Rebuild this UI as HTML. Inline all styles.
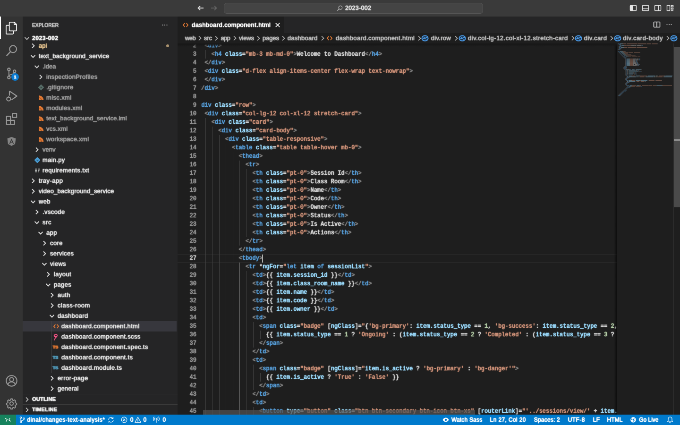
<!DOCTYPE html>
<html lang="en"><head><meta charset="utf-8"><title>dashboard.component.html — 2023-002</title>
<style>
html,body{margin:0;padding:0;background:#1e1e1e;overflow:hidden;width:680px;height:425px}
#app{position:absolute;left:0;top:0;width:1440px;height:900px;transform:scale(0.4722222);transform-origin:0 0;font-family:"Liberation Sans",sans-serif;font-size:13px;color:#ccc;background:#1e1e1e;overflow:hidden}
#app *{box-sizing:border-box}
#app{-webkit-text-stroke:0.35px currentColor;text-shadow:0 0 1.6px currentColor,0 0 1.6px currentColor;will-change:transform}
.abs{position:absolute}
/* title bar */
#title{position:absolute;left:0;top:0;width:1440px;height:35px;background:#3a3a3a}
#cc{position:absolute;left:474px;top:6px;width:549px;height:23px;border-radius:6px;background:#444444;border:1px solid #585858}
#cc .t{position:absolute;left:256px;top:3px;font-size:12.5px;color:#e2e2e2;white-space:nowrap;letter-spacing:.3px}
/* activity */
#act{position:absolute;left:0;top:35px;width:48px;height:843px;background:#333333}
#act .it{position:absolute;left:0;width:48px;height:48px;color:#989898}
#act .it svg{position:absolute;left:10.5px;top:10.5px;width:27px;height:27px;overflow:visible}
#act .it.on{color:#fff;border-left:2px solid #fff}
#act .it.on svg{left:9px}
/* sidebar */
#side{position:absolute;left:48px;top:35px;width:328px;height:843px;background:#252526;overflow:hidden}
#side .ttl{position:absolute;left:20px;top:13px;font-size:10.3px;color:#c4c4c4}
#side .hdr{position:absolute;left:0;width:328px;height:22px;font-size:12.3px;font-weight:bold;color:#ececec;-webkit-text-stroke:0.2px currentColor}
#side .hdr .lb{position:absolute;left:20px;top:3.5px;white-space:nowrap;letter-spacing:.45px}
#side .hdr svg{position:absolute;left:1px;top:3px;width:16px;height:16px}
#tree{position:absolute;left:0;top:57px;width:328px;height:742px;overflow:hidden}
.tr{position:absolute;left:0;width:328px;height:22px;color:#dedede;font-size:13px}
.tr .lb{position:absolute;top:3px;white-space:nowrap}
.tr.dim{color:#9a9a9a}
.tr.mod{color:#e2c08d}
.tr.sel{background:#37373d;width:326px}
.tr .twb{position:absolute;top:3px;width:16px;height:16px;color:#d6d6d6}
.tr.dim .twb{color:#cfcfcf}
.tw{width:16px;height:16px;display:block}
.tr .fib{position:absolute;top:3px;width:16px;height:16px}
.fi{width:16px;height:16px;display:block}
.fit{position:absolute;left:.5px;top:2px;font-size:9.800px;font-weight:bold;letter-spacing:-.4px;-webkit-text-stroke:.5px currentColor}
.dot{position:absolute;right:18px;top:8px;width:6px;height:6px;border-radius:3px;background:#e2c08d;opacity:.7}
.tg{position:absolute;width:1px;background:#4a4a4a}
/* editor */
#tabs{position:absolute;left:376px;top:35px;width:1064px;height:35px;background:#252526}
#tab{position:absolute;left:0;top:0;width:226px;height:35px;background:#1e1e1e}
#tab .lb{position:absolute;left:30px;top:10px;font-size:13px;color:#ffffff;white-space:nowrap;letter-spacing:.41px}
#bc{position:absolute;left:376px;top:70px;width:1064px;height:22px;background:#1e1e1e;font-size:13px;color:#bababa;overflow:hidden}
#bc span{position:absolute;top:3px;white-space:nowrap}
#bc svg{position:absolute;top:3px;width:16px;height:16px}
#ed{position:absolute;left:376px;top:92px;width:1064px;height:786px;background:#1e1e1e;overflow:hidden}
#codeclip{position:absolute;left:49px;top:0;width:881px;height:786px;overflow:hidden}
#codein{position:absolute;left:-49px;top:0;width:2000px;height:786px}
.cl{position:absolute;left:42.9px;height:18px;line-height:18px;font-family:"Liberation Mono",monospace;font-size:12px;letter-spacing:0.0254px;white-space:pre;color:#d4d4d4}
.ig{position:absolute;width:1px;background:#404040}
.ln{position:absolute;left:0;width:40px;height:18px;line-height:18px;text-align:right;font-family:"Liberation Mono",monospace;font-size:12px;color:#929292}
.ln.act{color:#c6c6c6}
#curline{position:absolute;left:0;top:446.3px;width:930px;height:18px;border-top:1.5px solid #2c2c2c;border-bottom:1.5px solid #2c2c2c}
#mmwrap{position:absolute;left:930px;top:0;width:120px;height:786px;background:#1e1e1e}
.mm{position:absolute;left:2px;top:0;opacity:.42}
#vsb{position:absolute;left:1050px;top:0;width:14px;height:786px;border-left:1px solid #303030}
#vsl{position:absolute;left:0px;top:7px;width:14px;height:340px;background:#4a4a4a}
#hsl{position:absolute;left:54px;top:775.500px;width:576px;height:10.500px;background:#505050;opacity:.75}
/* status */
#status{position:absolute;left:0;top:878px;width:1440px;height:22px;background:#007acc;color:#fff;font-size:12px}
#status .r{position:absolute;left:0;top:0;width:34px;height:22px;background:#16825d}
#status span{position:absolute;top:4px;white-space:nowrap}
#status svg{position:absolute;top:3px;width:16px;height:16px}
</style></head>
<body>
<div id="app">

<!-- TITLE BAR -->
<div id="title">
  <svg class="abs" style="left:417px;top:9px;width:16px;height:16px" viewBox="0 0 16 16"><path d="M14 8H3M7 3.500L2.500 8 7 12.500" fill="none" stroke="#dcdcdc" stroke-width="1.800"/></svg>
  <svg class="abs" style="left:445px;top:9px;width:16px;height:16px" viewBox="0 0 16 16"><path d="M2 8h11M9 3.500L13.500 8 9 12.500" fill="none" stroke="#6c6c6c" stroke-width="1.600"/></svg>
  <div id="cc">
    <svg class="abs" style="left:237px;top:3px;width:15px;height:15px" viewBox="0 0 16 16"><circle cx="9.500" cy="6.500" r="4" fill="none" stroke="#cccccc" stroke-width="1.200"/><path d="M6.700 9.300L2.500 13.500" stroke="#cccccc" stroke-width="1.300"/></svg>
    <span class="t">2023-002</span>
  </div>
  <!-- layout controls -->
  <svg class="abs" style="left:1333px;top:9px;width:16px;height:16px" viewBox="0 0 16 16"><rect x="1.500" y="2.500" width="13" height="11" rx="1" fill="none" stroke="#e4e4e4" stroke-width="1.500"/><rect x="2" y="3" width="5.500" height="10" fill="#e4e4e4"/></svg>
  <svg class="abs" style="left:1359px;top:9px;width:16px;height:16px" viewBox="0 0 16 16"><rect x="1.500" y="2.500" width="13" height="11" rx="1" fill="none" stroke="#e4e4e4" stroke-width="1.500"/><path d="M2 9.500h12" stroke="#e4e4e4" stroke-width="1.500"/></svg>
  <svg class="abs" style="left:1385px;top:9px;width:16px;height:16px" viewBox="0 0 16 16"><rect x="1.500" y="2.500" width="13" height="11" rx="1" fill="none" stroke="#e4e4e4" stroke-width="1.500"/><path d="M9.500 3v10" stroke="#e4e4e4" stroke-width="1.500"/></svg>
  <svg class="abs" style="left:1411px;top:9px;width:16px;height:16px" viewBox="0 0 16 16"><rect x="1.500" y="2.500" width="6" height="11" fill="none" stroke="#e4e4e4" stroke-width="1.500"/><rect x="10.500" y="2.500" width="4" height="3" fill="none" stroke="#e4e4e4" stroke-width="1.500"/><rect x="10.500" y="8" width="4" height="2.500" fill="none" stroke="#e4e4e4" stroke-width="1.500"/><path d="M10 13.500h5" stroke="#e4e4e4" stroke-width="1.500"/></svg>
</div>

<!-- ACTIVITY BAR -->
<div id="act">
  <div class="it on" style="top:0">
    <svg viewBox="0 0 24 24"><path d="M17.500 0h-9L7 1.500V6H2.500L1 7.500v15.070L2.500 24h12.070L16 22.570V18h4.700l1.300-1.430V4.500L17.500 0zm0 2.120l2.380 2.380H17.500V2.120zm-3 20.380h-12v-15H7v9.070L8.500 18h6v4.500zm6-6h-12v-15H16V6h4.500v10.500z" fill="currentColor"/></svg>
  </div>
  <div class="it" style="top:48px">
    <svg viewBox="0 0 24 24"><circle cx="14.800" cy="8.800" r="6.600" fill="none" stroke="currentColor" stroke-width="1.900"/><path d="M10.200 13.500L2.500 21.500" stroke="currentColor" stroke-width="2.100" fill="none"/></svg>
  </div>
  <div class="it" style="top:96px">
    <svg viewBox="0 0 24 24"><circle cx="7" cy="4.500" r="2.400" fill="none" stroke="currentColor" stroke-width="1.800"/><circle cx="7" cy="19.500" r="2.400" fill="none" stroke="currentColor" stroke-width="1.800"/><circle cx="17.500" cy="8" r="2.400" fill="none" stroke="currentColor" stroke-width="1.800"/><path d="M7 7v10M17.500 10.500c0 4-10.500 2.500-10.500 6.500" fill="none" stroke="currentColor" stroke-width="1.800"/></svg>
    <div class="abs" style="left:24px;top:24px;width:16px;height:16px;border-radius:8px;background:#0a7ad0;color:#fff;font-size:9px;font-weight:bold;text-align:center;line-height:16px">1</div>
  </div>
  <div class="it" style="top:144px">
    <svg viewBox="0 0 24 24"><path d="M8 2.500L22 12 12 19M8 11V2.500" fill="none" stroke="currentColor" stroke-width="1.900" stroke-linejoin="round"/><circle cx="6.500" cy="17.500" r="3.600" fill="none" stroke="currentColor" stroke-width="1.800"/><path d="M6.500 13.500v-2M1.500 17.500h1.500M10 17.500h1.500M3 13.800l1.200 1.200M10 13.800l-1.200 1.200" stroke="currentColor" stroke-width="1.300"/></svg>
  </div>
  <div class="it" style="top:192px">
    <svg viewBox="0 0 24 24"><path d="M2.500 7.500h7.500v7.500h7.500v7.500h-15zM10 15H2.500M10 15v7.500" fill="none" stroke="currentColor" stroke-width="1.900"/><rect x="14" y="2" width="7.500" height="7.500" fill="none" stroke="currentColor" stroke-width="1.900"/></svg>
  </div>
  <div class="it" style="top:240px">
    <svg viewBox="0 0 24 24"><g transform="translate(1.400,1.400) scale(.88)"><path d="M12 2.500l9 3.200-1.400 11.800L12 21.700l-7.600-4.200L3 5.700z" fill="#848484"/><path d="M12 6l-5 11h2l1-2.600h4l1 2.600h2zm0 3.700l1.400 3.300h-2.800z" fill="#333333"/></g></svg>
  </div>
  <div class="it" style="top:747px">
    <svg viewBox="0 0 24 24"><circle cx="12" cy="12" r="10" fill="none" stroke="currentColor" stroke-width="1.800"/><circle cx="12" cy="9.500" r="3.600" fill="none" stroke="currentColor" stroke-width="1.800"/><path d="M5 19c1-3.500 3.800-5 7-5s6 1.500 7 5" fill="none" stroke="currentColor" stroke-width="1.800"/></svg>
  </div>
  <div class="it" style="top:795px">
    <svg viewBox="0 0 24 24"><circle cx="12" cy="12" r="3.200" fill="none" stroke="currentColor" stroke-width="1.800"/><path d="M12 2.200l1.600.2.700 2.600 1.700.7 2.300-1.300 2.300 2.300-1.300 2.300.7 1.700 2.600.7v3.200l-2.600.7-.7 1.700 1.300 2.300-2.300 2.300-2.300-1.300-1.700.7-.7 2.600h-3.200l-.7-2.600-1.700-.7-2.300 1.300-2.300-2.300 1.300-2.300-.7-1.700-2.600-.7v-3.200l2.600-.7.7-1.700-1.300-2.300 2.300-2.300 2.300 1.300 1.700-.7.700-2.600z" fill="none" stroke="currentColor" stroke-width="1.900" stroke-linejoin="round" transform="translate(1.200,1.200) scale(.9)"/></svg>
  </div>
</div>

<!-- SIDE BAR -->
<div id="side">
  <div class="ttl">EXPLORER</div>
  <svg class="abs" style="left:293px;top:10px;width:16px;height:16px" viewBox="0 0 16 16"><circle cx="3.500" cy="8" r="1.100" fill="#c5c5c5"/><circle cx="8" cy="8" r="1.100" fill="#c5c5c5"/><circle cx="12.500" cy="8" r="1.100" fill="#c5c5c5"/></svg>
  <div class="hdr" style="top:35px"><svg viewBox="0 0 16 16"><path d="M3.500 6l4.500 4.500L12.500 6" fill="none" stroke="#d0d0d0" stroke-width="1.700"/></svg><span class="lb">2023-002</span></div>
  <div id="tree">
<div class="tr mod" style="top:-6px"><span class="twb" style="left:14px"><svg class="tw" viewBox="0 0 16 16"><path d="M6 3.5l4.5 4.5L6 12.5" fill="none" stroke="currentColor" stroke-width="2"/></svg></span><span class="lb" style="left:34px;letter-spacing:0.04px">api</span><span class="dot"></span></div>
<div class="tr" style="top:16px"><span class="twb" style="left:14px"><svg class="tw" viewBox="0 0 16 16"><path d="M3.5 6l4.5 4.5L12.5 6" fill="none" stroke="currentColor" stroke-width="2"/></svg></span><span class="lb" style="left:34px;letter-spacing:0.21px">text_background_service</span></div>
<div class="tr dim" style="top:38px"><span class="twb" style="left:22px"><svg class="tw" viewBox="0 0 16 16"><path d="M3.5 6l4.5 4.5L12.5 6" fill="none" stroke="currentColor" stroke-width="2"/></svg></span><span class="lb" style="left:42px;letter-spacing:0.08px">.idea</span></div>
<div class="tr dim" style="top:60px"><span class="twb" style="left:30px"><svg class="tw" viewBox="0 0 16 16"><path d="M6 3.5l4.5 4.5L6 12.5" fill="none" stroke="currentColor" stroke-width="2"/></svg></span><span class="lb" style="left:50px;letter-spacing:0.37px">inspectionProfiles</span></div>
<div class="tr dim" style="top:82px"><span class="fib" style="left:31px"><svg class="fi" viewBox="0 0 16 16"><rect x="3.4" y="3.4" width="9.200" height="9.200" transform="rotate(45 8 8)" fill="#566b66"/><circle cx="8" cy="8" r="1.300" fill="#2c3634"/></svg></span><span class="lb" style="left:50px;letter-spacing:0.42px">.gitignore</span></div>
<div class="tr dim" style="top:104px"><span class="fib" style="left:31px"><svg class="fi" viewBox="0 0 16 16"><path d="M3.500 3.200c5.500 0 9.800 4.300 9.800 9.800H3.500z" fill="#e37933"/><path d="M3.500 7.800a5.200 5.200 0 0 1 5.200 5.200" fill="none" stroke="#8a4a22" stroke-width="1.100"/></svg></span><span class="lb" style="left:50px;letter-spacing:0.37px">misc.xml</span></div>
<div class="tr dim" style="top:126px"><span class="fib" style="left:31px"><svg class="fi" viewBox="0 0 16 16"><path d="M3.500 3.200c5.500 0 9.800 4.300 9.800 9.800H3.500z" fill="#e37933"/><path d="M3.500 7.800a5.200 5.200 0 0 1 5.200 5.200" fill="none" stroke="#8a4a22" stroke-width="1.100"/></svg></span><span class="lb" style="left:50px;letter-spacing:0.30px">modules.xml</span></div>
<div class="tr dim" style="top:148px"><span class="fib" style="left:31px"><svg class="fi" viewBox="0 0 16 16"><path d="M3.500 3.200c5.500 0 9.800 4.300 9.800 9.800H3.500z" fill="#e37933"/><path d="M3.500 7.800a5.200 5.200 0 0 1 5.200 5.200" fill="none" stroke="#8a4a22" stroke-width="1.100"/></svg></span><span class="lb" style="left:50px;letter-spacing:0.23px">text_background_service.iml</span></div>
<div class="tr dim" style="top:170px"><span class="fib" style="left:31px"><svg class="fi" viewBox="0 0 16 16"><path d="M3.500 3.200c5.500 0 9.800 4.300 9.800 9.800H3.500z" fill="#e37933"/><path d="M3.500 7.800a5.200 5.200 0 0 1 5.200 5.200" fill="none" stroke="#8a4a22" stroke-width="1.100"/></svg></span><span class="lb" style="left:50px;letter-spacing:0.31px">vcs.xml</span></div>
<div class="tr dim" style="top:192px"><span class="fib" style="left:31px"><svg class="fi" viewBox="0 0 16 16"><path d="M3.500 3.200c5.500 0 9.800 4.300 9.800 9.800H3.500z" fill="#e37933"/><path d="M3.500 7.800a5.200 5.200 0 0 1 5.200 5.200" fill="none" stroke="#8a4a22" stroke-width="1.100"/></svg></span><span class="lb" style="left:50px;letter-spacing:0.35px">workspace.xml</span></div>
<div class="tr dim" style="top:214px"><span class="twb" style="left:22px"><svg class="tw" viewBox="0 0 16 16"><path d="M6 3.5l4.5 4.5L6 12.5" fill="none" stroke="currentColor" stroke-width="2"/></svg></span><span class="lb" style="left:42px;letter-spacing:0.02px">venv</span></div>
<div class="tr" style="top:236px"><span class="fib" style="left:23px"><svg class="fi" viewBox="0 0 16 16"><rect x="3.300" y="3.300" width="9.400" height="9.400" rx="1.500" transform="rotate(45 8 8)" fill="#4a9fd6"/><path d="M4.500 8h3v-2.500M11.500 8h-3v2.500" fill="none" stroke="#2b5f86" stroke-width="1"/></svg></span><span class="lb" style="left:42px;letter-spacing:0.30px">main.py</span></div>
<div class="tr" style="top:258px"><span class="fib" style="left:23px"><svg class="fi" viewBox="0 0 16 16"><path d="M3 4h4M3 7h4M3 10h4M9 4h5M9 7h3.500M9 10h2.500" transform="translate(0,1)" stroke="#d4d7d6" stroke-width="1.5" fill="none"/></svg></span><span class="lb" style="left:42px;letter-spacing:0.36px">requirements.txt</span></div>
<div class="tr" style="top:280px"><span class="twb" style="left:14px"><svg class="tw" viewBox="0 0 16 16"><path d="M6 3.5l4.5 4.5L6 12.5" fill="none" stroke="currentColor" stroke-width="2"/></svg></span><span class="lb" style="left:34px;letter-spacing:0.46px">tray-app</span></div>
<div class="tr" style="top:302px"><span class="twb" style="left:14px"><svg class="tw" viewBox="0 0 16 16"><path d="M6 3.5l4.5 4.5L6 12.5" fill="none" stroke="currentColor" stroke-width="2"/></svg></span><span class="lb" style="left:34px;letter-spacing:0.20px">video_background_service</span></div>
<div class="tr" style="top:324px"><span class="twb" style="left:14px"><svg class="tw" viewBox="0 0 16 16"><path d="M3.5 6l4.5 4.5L12.5 6" fill="none" stroke="currentColor" stroke-width="2"/></svg></span><span class="lb" style="left:34px;letter-spacing:0.34px">web</span></div>
<div class="tr" style="top:346px"><span class="twb" style="left:22px"><svg class="tw" viewBox="0 0 16 16"><path d="M6 3.5l4.5 4.5L6 12.5" fill="none" stroke="currentColor" stroke-width="2"/></svg></span><span class="lb" style="left:42px;letter-spacing:0.40px">.vscode</span></div>
<div class="tr" style="top:368px"><span class="twb" style="left:22px"><svg class="tw" viewBox="0 0 16 16"><path d="M3.5 6l4.5 4.5L12.5 6" fill="none" stroke="currentColor" stroke-width="2"/></svg></span><span class="lb" style="left:42px;letter-spacing:0.57px">src</span></div>
<div class="tr" style="top:390px"><span class="twb" style="left:30px"><svg class="tw" viewBox="0 0 16 16"><path d="M3.5 6l4.5 4.5L12.5 6" fill="none" stroke="currentColor" stroke-width="2"/></svg></span><span class="lb" style="left:50px;letter-spacing:0.35px">app</span></div>
<div class="tr" style="top:412px"><span class="twb" style="left:38px"><svg class="tw" viewBox="0 0 16 16"><path d="M6 3.5l4.5 4.5L6 12.5" fill="none" stroke="currentColor" stroke-width="2"/></svg></span><span class="lb" style="left:58px;letter-spacing:0.43px">core</span></div>
<div class="tr" style="top:434px"><span class="twb" style="left:38px"><svg class="tw" viewBox="0 0 16 16"><path d="M6 3.5l4.5 4.5L6 12.5" fill="none" stroke="currentColor" stroke-width="2"/></svg></span><span class="lb" style="left:58px;letter-spacing:0.33px">services</span></div>
<div class="tr" style="top:456px"><span class="twb" style="left:38px"><svg class="tw" viewBox="0 0 16 16"><path d="M3.5 6l4.5 4.5L12.5 6" fill="none" stroke="currentColor" stroke-width="2"/></svg></span><span class="lb" style="left:58px;letter-spacing:0.27px">views</span></div>
<div class="tr" style="top:478px"><span class="twb" style="left:46px"><svg class="tw" viewBox="0 0 16 16"><path d="M6 3.5l4.5 4.5L6 12.5" fill="none" stroke="currentColor" stroke-width="2"/></svg></span><span class="lb" style="left:66px;letter-spacing:0.39px">layout</span></div>
<div class="tr" style="top:500px"><span class="twb" style="left:46px"><svg class="tw" viewBox="0 0 16 16"><path d="M3.5 6l4.5 4.5L12.5 6" fill="none" stroke="currentColor" stroke-width="2"/></svg></span><span class="lb" style="left:66px;letter-spacing:0.33px">pages</span></div>
<div class="tr" style="top:522px"><span class="twb" style="left:54px"><svg class="tw" viewBox="0 0 16 16"><path d="M6 3.5l4.5 4.5L6 12.5" fill="none" stroke="currentColor" stroke-width="2"/></svg></span><span class="lb" style="left:74px;letter-spacing:0.42px">auth</span></div>
<div class="tr" style="top:544px"><span class="twb" style="left:54px"><svg class="tw" viewBox="0 0 16 16"><path d="M6 3.5l4.5 4.5L6 12.5" fill="none" stroke="currentColor" stroke-width="2"/></svg></span><span class="lb" style="left:74px;letter-spacing:0.52px">class-room</span></div>
<div class="tr" style="top:566px"><span class="twb" style="left:54px"><svg class="tw" viewBox="0 0 16 16"><path d="M3.5 6l4.5 4.5L12.5 6" fill="none" stroke="currentColor" stroke-width="2"/></svg></span><span class="lb" style="left:74px;letter-spacing:0.35px">dashboard</span></div>
<div class="tr sel" style="top:588px"><span class="fib" style="left:63px"><svg class="fi" viewBox="0 0 16 16"><path d="M6.300 4L3 8l3.300 4M9.700 4L13 8l-3.300 4" fill="none" stroke="#e37933" stroke-width="1.900"/></svg></span><span class="lb" style="left:82px;letter-spacing:0.33px">dashboard.component.html</span></div>
<div class="tr" style="top:610px"><span class="fib" style="left:63px"><svg class="fi" viewBox="0 0 16 16"><path d="M5 15c-.5-2.500.8-4.300 2.500-5.800 1.600-1.400 3-2.800 2.500-4.600-.5-1.600-3-1.800-4.800-.7C3.500 5 3.200 6.700 4.300 7.500c1.100.8 2.700.3 3.400-.7" fill="none" stroke="#f55385" stroke-width="1.900" stroke-linecap="round"/></svg></span><span class="lb" style="left:82px;letter-spacing:0.36px">dashboard.component.scss</span></div>
<div class="tr" style="top:632px"><span class="fib" style="left:63px"><span class="fit" style="color:#e37933">TS</span></span><span class="lb" style="left:82px;letter-spacing:0.35px">dashboard.component.spec.ts</span></div>
<div class="tr" style="top:654px"><span class="fib" style="left:63px"><span class="fit" style="color:#519aba">TS</span></span><span class="lb" style="left:82px;letter-spacing:0.38px">dashboard.component.ts</span></div>
<div class="tr" style="top:676px"><span class="fib" style="left:63px"><span class="fit" style="color:#519aba">TS</span></span><span class="lb" style="left:82px;letter-spacing:0.37px">dashboard.module.ts</span></div>
<div class="tr" style="top:698px"><span class="twb" style="left:54px"><svg class="tw" viewBox="0 0 16 16"><path d="M6 3.5l4.5 4.5L6 12.5" fill="none" stroke="currentColor" stroke-width="2"/></svg></span><span class="lb" style="left:74px;letter-spacing:0.39px">error-page</span></div>
<div class="tr" style="top:720px"><span class="twb" style="left:54px"><svg class="tw" viewBox="0 0 16 16"><path d="M6 3.5l4.5 4.5L6 12.5" fill="none" stroke="currentColor" stroke-width="2"/></svg></span><span class="lb" style="left:74px;letter-spacing:0.19px">general</span></div>
<div class="tg" style="left:60px;top:588px;height:110px"></div>
  </div>
  <div class="hdr" style="top:799px;border-top:1px solid #3c3c3c"><svg viewBox="0 0 16 16"><path d="M6 3.500l4.500 4.500L6 12.500" fill="none" stroke="#d0d0d0" stroke-width="1.700"/></svg><span class="lb" style="font-size:11.4px;letter-spacing:0;top:4px">OUTLINE</span></div>
  <div class="hdr" style="top:821px;border-top:1px solid #3c3c3c"><svg viewBox="0 0 16 16"><path d="M6 3.500l4.500 4.500L6 12.500" fill="none" stroke="#d0d0d0" stroke-width="1.700"/></svg><span class="lb" style="font-size:11.4px;letter-spacing:0;top:4px">TIMELINE</span></div>
</div>

<!-- TABS -->
<div id="tabs">
  <div id="tab">
    <svg class="abs" style="left:9px;top:10px;width:16px;height:16px" viewBox="0 0 16 16"><path d="M6.300 4L3 8l3.300 4M9.700 4L13 8l-3.300 4" fill="none" stroke="#e37933" stroke-width="1.900"/></svg>
    <span class="lb">dashboard.component.html</span>
    <svg class="abs" style="left:204px;top:10px;width:16px;height:16px" viewBox="0 0 16 16"><path d="M3.800 3.800l8.400 8.400M12.200 3.800l-8.400 8.400" stroke="#f0f0f0" stroke-width="1.800"/></svg>
  </div>
  <svg class="abs" style="left:1007px;top:9px;width:16px;height:16px" viewBox="0 0 16 16"><rect x="1.500" y="2.500" width="13" height="11" rx="1" fill="none" stroke="#e8e8e8" stroke-width="1.600"/><path d="M8 3v10" stroke="#e8e8e8" stroke-width="1.600"/></svg>
  <svg class="abs" style="left:1033px;top:9px;width:16px;height:16px" viewBox="0 0 16 16"><circle cx="3.500" cy="8" r="1.100" fill="#c5c5c5"/><circle cx="8" cy="8" r="1.100" fill="#c5c5c5"/><circle cx="12.500" cy="8" r="1.100" fill="#c5c5c5"/></svg>
</div>

<!-- BREADCRUMBS -->
<div id="bc">
<span style="left:15.8px;letter-spacing:-0.47px">web</span>
<svg style="left:38.5px" viewBox="0 0 16 16"><path d="M6 3.500l4.500 4.500L6 12.500" fill="none" stroke="#b4b4b4" stroke-width="1.700"/></svg>
<span style="left:55.8px;letter-spacing:-0.06px">src</span>
<svg style="left:74.0px" viewBox="0 0 16 16"><path d="M6 3.500l4.500 4.500L6 12.500" fill="none" stroke="#b4b4b4" stroke-width="1.700"/></svg>
<span style="left:91.6px;letter-spacing:-0.74px">app</span>
<svg style="left:112.6px" viewBox="0 0 16 16"><path d="M6 3.500l4.500 4.500L6 12.500" fill="none" stroke="#b4b4b4" stroke-width="1.700"/></svg>
<span style="left:130.1px;letter-spacing:-0.15px">views</span>
<svg style="left:163.0px" viewBox="0 0 16 16"><path d="M6 3.500l4.500 4.500L6 12.500" fill="none" stroke="#b4b4b4" stroke-width="1.700"/></svg>
<span style="left:180.1px;letter-spacing:-0.14px">pages</span>
<svg style="left:215.7px" viewBox="0 0 16 16"><path d="M6 3.500l4.500 4.500L6 12.500" fill="none" stroke="#b4b4b4" stroke-width="1.700"/></svg>
<span style="left:232.8px;letter-spacing:0.25px">dashboard</span>
<svg style="left:298.9px" viewBox="0 0 16 16"><path d="M6 3.500l4.500 4.500L6 12.500" fill="none" stroke="#b4b4b4" stroke-width="1.700"/></svg>
<svg style="left:313.7px" viewBox="0 0 16 16"><path d="M6.300 4L3 8l3.300 4M9.700 4L13 8l-3.300 4" fill="none" stroke="#e37933" stroke-width="1.900"/></svg>
<span style="left:334.9px;letter-spacing:0.41px">dashboard.component.html</span>
<svg style="left:504.4px" viewBox="0 0 16 16"><path d="M6 3.500l4.500 4.500L6 12.500" fill="none" stroke="#b4b4b4" stroke-width="1.700"/></svg>
<svg style="left:516.0px" viewBox="0 0 16 16"><ellipse cx="8" cy="8" rx="6.600" ry="5.600" fill="#1c3147" stroke="#4b9ae6" stroke-width="2"/><path d="M3 9.500L13 6M5 5.500l3.500 2.500M11 10.500l-2.500-2" fill="none" stroke="#4b9ae6" stroke-width="1.500"/></svg>
<span style="left:536.7px;letter-spacing:0.30px">div.row</span>
<svg style="left:581.6px" viewBox="0 0 16 16"><path d="M6 3.500l4.500 4.500L6 12.500" fill="none" stroke="#b4b4b4" stroke-width="1.700"/></svg>
<svg style="left:595.4px" viewBox="0 0 16 16"><ellipse cx="8" cy="8" rx="6.600" ry="5.600" fill="#1c3147" stroke="#4b9ae6" stroke-width="2"/><path d="M3 9.500L13 6M5 5.500l3.500 2.500M11 10.500l-2.500-2" fill="none" stroke="#4b9ae6" stroke-width="1.500"/></svg>
<span style="left:615.1px;letter-spacing:0.49px">div.col-lg-12.col-xl-12.stretch-card</span>
<svg style="left:829.4px" viewBox="0 0 16 16"><path d="M6 3.500l4.500 4.500L6 12.500" fill="none" stroke="#b4b4b4" stroke-width="1.700"/></svg>
<svg style="left:841.1px" viewBox="0 0 16 16"><ellipse cx="8" cy="8" rx="6.600" ry="5.600" fill="#1c3147" stroke="#4b9ae6" stroke-width="2"/><path d="M3 9.500L13 6M5 5.500l3.500 2.500M11 10.500l-2.500-2" fill="none" stroke="#4b9ae6" stroke-width="1.500"/></svg>
<span style="left:860.7px;letter-spacing:0.52px">div.card</span>
<svg style="left:910.9px" viewBox="0 0 16 16"><path d="M6 3.500l4.500 4.500L6 12.500" fill="none" stroke="#b4b4b4" stroke-width="1.700"/></svg>
<svg style="left:923.6px" viewBox="0 0 16 16"><ellipse cx="8" cy="8" rx="6.600" ry="5.600" fill="#1c3147" stroke="#4b9ae6" stroke-width="2"/><path d="M3 9.500L13 6M5 5.500l3.500 2.500M11 10.500l-2.500-2" fill="none" stroke="#4b9ae6" stroke-width="1.500"/></svg>
<span style="left:943.3px;letter-spacing:0.59px">div.card-body</span>
<svg style="left:1029.5px" viewBox="0 0 16 16"><path d="M6 3.500l4.500 4.500L6 12.500" fill="none" stroke="#b4b4b4" stroke-width="1.700"/></svg>
<svg style="left:1043.3px" viewBox="0 0 16 16"><ellipse cx="8" cy="8" rx="6.600" ry="5.600" fill="#1c3147" stroke="#4b9ae6" stroke-width="2"/><path d="M3 9.500L13 6M5 5.500l3.500 2.500M11 10.500l-2.500-2" fill="none" stroke="#4b9ae6" stroke-width="1.500"/></svg>
</div>

<!-- EDITOR -->
<div id="ed">
  <div id="curline"></div>
  <div class="abs" style="left:0;top:0;width:930px;height:2px;background:#171717;z-index:5"></div>
  <div class="abs" style="left:0;top:2px;width:930px;height:5px;background:linear-gradient(rgba(23,23,23,.9),rgba(30,30,30,0));z-index:5"></div>
  <div id="codeclip"><div id="codein">
<div class="ig" style="left:44.5px;top:-3.7px;height:90px"></div>
<div class="ig" style="left:44.5px;top:140.3px;height:666px"></div>
<div class="ig" style="left:59.0px;top:14.3px;height:18px"></div>
<div class="ig" style="left:59.0px;top:158.3px;height:648px"></div>
<div class="ig" style="left:73.4px;top:176.3px;height:630px"></div>
<div class="ig" style="left:87.9px;top:194.3px;height:612px"></div>
<div class="ig" style="left:102.3px;top:212.3px;height:594px"></div>
<div class="ig" style="left:116.8px;top:230.3px;height:576px"></div>
<div class="ig" style="left:131.2px;top:248.3px;height:180px"></div>
<div class="ig" style="left:131.2px;top:464.3px;height:342px;background:#707070"></div>
<div class="ig" style="left:145.7px;top:266.3px;height:144px"></div>
<div class="ig" style="left:145.7px;top:482.3px;height:324px"></div>
<div class="ig" style="left:160.1px;top:590.3px;height:54px"></div>
<div class="ig" style="left:160.1px;top:680.3px;height:54px"></div>
<div class="ig" style="left:160.1px;top:770.3px;height:36px"></div>
<div class="ig" style="left:174.6px;top:608.3px;height:18px"></div>
<div class="ig" style="left:174.6px;top:698.3px;height:18px"></div>
<div class="ig" style="left:174.6px;top:788.3px;height:18px"></div>
<div class="cl" style="top:-3.7px">  <span style="color:#808080">&lt;</span><span style="color:#569cd6">div</span><span style="color:#808080">&gt;</span></div>
<div class="cl" style="top:14.3px">    <span style="color:#808080">&lt;</span><span style="color:#569cd6">h4</span> <span style="color:#9cdcfe">class</span><span style="color:#d4d4d4">=</span><span style="color:#ce9178">"mb-3 mb-md-0"</span><span style="color:#808080">&gt;</span><span style="color:#d4d4d4">Welcome to Dashboard</span><span style="color:#808080">&lt;/</span><span style="color:#569cd6">h4</span><span style="color:#808080">&gt;</span></div>
<div class="cl" style="top:32.3px">  <span style="color:#808080">&lt;/</span><span style="color:#569cd6">div</span><span style="color:#808080">&gt;</span></div>
<div class="cl" style="top:50.3px">  <span style="color:#808080">&lt;</span><span style="color:#569cd6">div</span> <span style="color:#9cdcfe">class</span><span style="color:#d4d4d4">=</span><span style="color:#ce9178">"d-flex align-items-center flex-wrap text-nowrap"</span><span style="color:#808080">&gt;</span></div>
<div class="cl" style="top:68.3px">  <span style="color:#808080">&lt;/</span><span style="color:#569cd6">div</span><span style="color:#808080">&gt;</span></div>
<div class="cl" style="top:86.3px"><span style="color:#808080">&lt;/</span><span style="color:#569cd6">div</span><span style="color:#808080">&gt;</span></div>
<div class="cl" style="top:104.3px"></div>
<div class="cl" style="top:122.3px"><span style="color:#808080">&lt;</span><span style="color:#569cd6">div</span> <span style="color:#9cdcfe">class</span><span style="color:#d4d4d4">=</span><span style="color:#ce9178">"row"</span><span style="color:#808080">&gt;</span></div>
<div class="cl" style="top:140.3px">  <span style="color:#808080">&lt;</span><span style="color:#569cd6">div</span> <span style="color:#9cdcfe">class</span><span style="color:#d4d4d4">=</span><span style="color:#ce9178">"col-lg-12 col-xl-12 stretch-card"</span><span style="color:#808080">&gt;</span></div>
<div class="cl" style="top:158.3px">    <span style="color:#808080">&lt;</span><span style="color:#569cd6">div</span> <span style="color:#9cdcfe">class</span><span style="color:#d4d4d4">=</span><span style="color:#ce9178">"card"</span><span style="color:#808080">&gt;</span></div>
<div class="cl" style="top:176.3px">      <span style="color:#808080">&lt;</span><span style="color:#569cd6">div</span> <span style="color:#9cdcfe">class</span><span style="color:#d4d4d4">=</span><span style="color:#ce9178">"card-body"</span><span style="color:#808080">&gt;</span></div>
<div class="cl" style="top:194.3px">        <span style="color:#808080">&lt;</span><span style="color:#569cd6">div</span> <span style="color:#9cdcfe">class</span><span style="color:#d4d4d4">=</span><span style="color:#ce9178">"table-responsive"</span><span style="color:#808080">&gt;</span></div>
<div class="cl" style="top:212.3px">          <span style="color:#808080">&lt;</span><span style="color:#569cd6">table</span> <span style="color:#9cdcfe">class</span><span style="color:#d4d4d4">=</span><span style="color:#ce9178">"table table-hover mb-0"</span><span style="color:#808080">&gt;</span></div>
<div class="cl" style="top:230.3px">            <span style="color:#808080">&lt;</span><span style="color:#569cd6">thead</span><span style="color:#808080">&gt;</span></div>
<div class="cl" style="top:248.3px">              <span style="color:#808080">&lt;</span><span style="color:#569cd6">tr</span><span style="color:#808080">&gt;</span></div>
<div class="cl" style="top:266.3px">                <span style="color:#808080">&lt;</span><span style="color:#569cd6">th</span> <span style="color:#9cdcfe">class</span><span style="color:#d4d4d4">=</span><span style="color:#ce9178">"pt-0"</span><span style="color:#808080">&gt;</span><span style="color:#d4d4d4">Session Id</span><span style="color:#808080">&lt;/</span><span style="color:#569cd6">th</span><span style="color:#808080">&gt;</span></div>
<div class="cl" style="top:284.3px">                <span style="color:#808080">&lt;</span><span style="color:#569cd6">th</span> <span style="color:#9cdcfe">class</span><span style="color:#d4d4d4">=</span><span style="color:#ce9178">"pt-0"</span><span style="color:#808080">&gt;</span><span style="color:#d4d4d4">Class Room</span><span style="color:#808080">&lt;/</span><span style="color:#569cd6">th</span><span style="color:#808080">&gt;</span></div>
<div class="cl" style="top:302.3px">                <span style="color:#808080">&lt;</span><span style="color:#569cd6">th</span> <span style="color:#9cdcfe">class</span><span style="color:#d4d4d4">=</span><span style="color:#ce9178">"pt-0"</span><span style="color:#808080">&gt;</span><span style="color:#d4d4d4">Name</span><span style="color:#808080">&lt;/</span><span style="color:#569cd6">th</span><span style="color:#808080">&gt;</span></div>
<div class="cl" style="top:320.3px">                <span style="color:#808080">&lt;</span><span style="color:#569cd6">th</span> <span style="color:#9cdcfe">class</span><span style="color:#d4d4d4">=</span><span style="color:#ce9178">"pt-0"</span><span style="color:#808080">&gt;</span><span style="color:#d4d4d4">Code</span><span style="color:#808080">&lt;/</span><span style="color:#569cd6">th</span><span style="color:#808080">&gt;</span></div>
<div class="cl" style="top:338.3px">                <span style="color:#808080">&lt;</span><span style="color:#569cd6">th</span> <span style="color:#9cdcfe">class</span><span style="color:#d4d4d4">=</span><span style="color:#ce9178">"pt-0"</span><span style="color:#808080">&gt;</span><span style="color:#d4d4d4">Owner</span><span style="color:#808080">&lt;/</span><span style="color:#569cd6">th</span><span style="color:#808080">&gt;</span></div>
<div class="cl" style="top:356.3px">                <span style="color:#808080">&lt;</span><span style="color:#569cd6">th</span> <span style="color:#9cdcfe">class</span><span style="color:#d4d4d4">=</span><span style="color:#ce9178">"pt-0"</span><span style="color:#808080">&gt;</span><span style="color:#d4d4d4">Status</span><span style="color:#808080">&lt;/</span><span style="color:#569cd6">th</span><span style="color:#808080">&gt;</span></div>
<div class="cl" style="top:374.3px">                <span style="color:#808080">&lt;</span><span style="color:#569cd6">th</span> <span style="color:#9cdcfe">class</span><span style="color:#d4d4d4">=</span><span style="color:#ce9178">"pt-0"</span><span style="color:#808080">&gt;</span><span style="color:#d4d4d4">Is Active</span><span style="color:#808080">&lt;/</span><span style="color:#569cd6">th</span><span style="color:#808080">&gt;</span></div>
<div class="cl" style="top:392.3px">                <span style="color:#808080">&lt;</span><span style="color:#569cd6">th</span> <span style="color:#9cdcfe">class</span><span style="color:#d4d4d4">=</span><span style="color:#ce9178">"pt-0"</span><span style="color:#808080">&gt;</span><span style="color:#d4d4d4">Actions</span><span style="color:#808080">&lt;/</span><span style="color:#569cd6">th</span><span style="color:#808080">&gt;</span></div>
<div class="cl" style="top:410.3px">              <span style="color:#808080">&lt;/</span><span style="color:#569cd6">tr</span><span style="color:#808080">&gt;</span></div>
<div class="cl" style="top:428.3px">            <span style="color:#808080">&lt;/</span><span style="color:#569cd6">thead</span><span style="color:#808080">&gt;</span></div>
<div class="cl" style="top:446.3px">            <span style="color:#808080">&lt;</span><span style="color:#569cd6">tbody</span><span style="color:#808080">&gt;</span></div>
<div class="cl" style="top:464.3px">              <span style="color:#808080">&lt;</span><span style="color:#569cd6">tr</span> <span style="color:#d4d4d4">*</span><span style="color:#9cdcfe">ngFor</span><span style="color:#d4d4d4">=</span><span style="color:#ce9178">"</span><span style="color:#569cd6">let</span> <span style="color:#9cdcfe">item</span> <span style="color:#569cd6">of</span> <span style="color:#9cdcfe">sessionList</span><span style="color:#ce9178">"</span><span style="color:#808080">&gt;</span></div>
<div class="cl" style="top:482.3px">                <span style="color:#808080">&lt;</span><span style="color:#569cd6">td</span><span style="color:#808080">&gt;</span><span style="color:#d4d4d4">{{</span> <span style="color:#9cdcfe">item.session_id</span> <span style="color:#d4d4d4">}}</span><span style="color:#808080">&lt;/</span><span style="color:#569cd6">td</span><span style="color:#808080">&gt;</span></div>
<div class="cl" style="top:500.3px">                <span style="color:#808080">&lt;</span><span style="color:#569cd6">td</span><span style="color:#808080">&gt;</span><span style="color:#d4d4d4">{{</span> <span style="color:#9cdcfe">item.class_room_name</span> <span style="color:#d4d4d4">}}</span><span style="color:#808080">&lt;/</span><span style="color:#569cd6">td</span><span style="color:#808080">&gt;</span></div>
<div class="cl" style="top:518.3px">                <span style="color:#808080">&lt;</span><span style="color:#569cd6">td</span><span style="color:#808080">&gt;</span><span style="color:#d4d4d4">{{</span> <span style="color:#9cdcfe">item.name</span> <span style="color:#d4d4d4">}}</span><span style="color:#808080">&lt;/</span><span style="color:#569cd6">td</span><span style="color:#808080">&gt;</span></div>
<div class="cl" style="top:536.3px">                <span style="color:#808080">&lt;</span><span style="color:#569cd6">td</span><span style="color:#808080">&gt;</span><span style="color:#d4d4d4">{{</span> <span style="color:#9cdcfe">item.code</span> <span style="color:#d4d4d4">}}</span><span style="color:#808080">&lt;/</span><span style="color:#569cd6">td</span><span style="color:#808080">&gt;</span></div>
<div class="cl" style="top:554.3px">                <span style="color:#808080">&lt;</span><span style="color:#569cd6">td</span><span style="color:#808080">&gt;</span><span style="color:#d4d4d4">{{</span> <span style="color:#9cdcfe">item.owner</span> <span style="color:#d4d4d4">}}</span><span style="color:#808080">&lt;/</span><span style="color:#569cd6">td</span><span style="color:#808080">&gt;</span></div>
<div class="cl" style="top:572.3px">                <span style="color:#808080">&lt;</span><span style="color:#569cd6">td</span><span style="color:#808080">&gt;</span></div>
<div class="cl" style="top:590.3px">                  <span style="color:#808080">&lt;</span><span style="color:#569cd6">span</span> <span style="color:#9cdcfe">class</span><span style="color:#d4d4d4">=</span><span style="color:#ce9178">"badge"</span> <span style="color:#d4d4d4">[</span><span style="color:#9cdcfe">ngClass</span><span style="color:#d4d4d4">]</span><span style="color:#d4d4d4">=</span><span style="color:#ce9178">"</span><span style="color:#d4d4d4">{</span><span style="color:#ce9178">'bg-primary'</span><span style="color:#d4d4d4">:</span> <span style="color:#9cdcfe">item.status_type</span> <span style="color:#d4d4d4">=</span><span style="color:#d4d4d4">=</span> <span style="color:#b5cea8">1</span><span style="color:#d4d4d4">,</span> <span style="color:#ce9178">'bg-success'</span><span style="color:#d4d4d4">:</span> <span style="color:#9cdcfe">item.status_type</span> <span style="color:#d4d4d4">=</span><span style="color:#d4d4d4">=</span> <span style="color:#b5cea8">2</span><span style="color:#d4d4d4">,</span> <span style="color:#ce9178">'bg-warning'</span><span style="color:#d4d4d4">:</span> <span style="color:#9cdcfe">item.status_type</span> <span style="color:#d4d4d4">=</span><span style="color:#d4d4d4">=</span> <span style="color:#b5cea8">3</span><span style="color:#d4d4d4">}</span><span style="color:#ce9178">"</span><span style="color:#808080">&gt;</span></div>
<div class="cl" style="top:608.3px">                    <span style="color:#d4d4d4">{{</span> <span style="color:#9cdcfe">item.status_type</span> <span style="color:#d4d4d4">=</span><span style="color:#d4d4d4">=</span> <span style="color:#b5cea8">1</span> <span style="color:#d4d4d4">?</span> <span style="color:#ce9178">'Ongoing'</span> <span style="color:#d4d4d4">:</span> <span style="color:#d4d4d4">(</span><span style="color:#9cdcfe">item.status_type</span> <span style="color:#d4d4d4">=</span><span style="color:#d4d4d4">=</span> <span style="color:#b5cea8">2</span> <span style="color:#d4d4d4">?</span> <span style="color:#ce9178">'Completed'</span> <span style="color:#d4d4d4">:</span> <span style="color:#d4d4d4">(</span><span style="color:#9cdcfe">item.status_type</span> <span style="color:#d4d4d4">=</span><span style="color:#d4d4d4">=</span> <span style="color:#b5cea8">3</span> <span style="color:#d4d4d4">?</span> <span style="color:#ce9178">'Pending'</span> <span style="color:#d4d4d4">:</span> <span style="color:#ce9178">''</span><span style="color:#d4d4d4">)</span><span style="color:#d4d4d4">)</span> <span style="color:#d4d4d4">}}</span></div>
<div class="cl" style="top:626.3px">                  <span style="color:#808080">&lt;/</span><span style="color:#569cd6">span</span><span style="color:#808080">&gt;</span></div>
<div class="cl" style="top:644.3px">                <span style="color:#808080">&lt;/</span><span style="color:#569cd6">td</span><span style="color:#808080">&gt;</span></div>
<div class="cl" style="top:662.3px">                <span style="color:#808080">&lt;</span><span style="color:#569cd6">td</span><span style="color:#808080">&gt;</span></div>
<div class="cl" style="top:680.3px">                  <span style="color:#808080">&lt;</span><span style="color:#569cd6">span</span> <span style="color:#9cdcfe">class</span><span style="color:#d4d4d4">=</span><span style="color:#ce9178">"badge"</span> <span style="color:#d4d4d4">[</span><span style="color:#9cdcfe">ngClass</span><span style="color:#d4d4d4">]</span><span style="color:#d4d4d4">=</span><span style="color:#ce9178">"</span><span style="color:#9cdcfe">item.is_active</span> <span style="color:#d4d4d4">?</span> <span style="color:#ce9178">'bg-primary'</span> <span style="color:#d4d4d4">:</span> <span style="color:#ce9178">'bg-danger'</span><span style="color:#ce9178">"</span><span style="color:#808080">&gt;</span></div>
<div class="cl" style="top:698.3px">                    <span style="color:#d4d4d4">{{</span> <span style="color:#9cdcfe">item.is_active</span> <span style="color:#d4d4d4">?</span> <span style="color:#ce9178">'True'</span> <span style="color:#d4d4d4">:</span> <span style="color:#ce9178">'False'</span> <span style="color:#d4d4d4">}}</span></div>
<div class="cl" style="top:716.3px">                  <span style="color:#808080">&lt;/</span><span style="color:#569cd6">span</span><span style="color:#808080">&gt;</span></div>
<div class="cl" style="top:734.3px">                <span style="color:#808080">&lt;/</span><span style="color:#569cd6">td</span><span style="color:#808080">&gt;</span></div>
<div class="cl" style="top:752.3px">                <span style="color:#808080">&lt;</span><span style="color:#569cd6">td</span><span style="color:#808080">&gt;</span></div>
<div class="cl" style="top:770.3px">                  <span style="color:#808080">&lt;</span><span style="color:#569cd6">button</span> <span style="color:#9cdcfe">type</span><span style="color:#d4d4d4">=</span><span style="color:#ce9178">"button"</span> <span style="color:#9cdcfe">class</span><span style="color:#d4d4d4">=</span><span style="color:#ce9178">"btn btn-secondary btn-icon btn-xs"</span> <span style="color:#d4d4d4">[</span><span style="color:#9cdcfe">routerLink</span><span style="color:#d4d4d4">]</span><span style="color:#d4d4d4">=</span><span style="color:#ce9178">"</span><span style="color:#ce9178">'../sessions/view/'</span> <span style="color:#d4d4d4">+</span> <span style="color:#9cdcfe">item.session_id</span><span style="color:#ce9178">"</span><span style="color:#808080">&gt;</span></div>
<div class="cl" style="top:788.3px">                    <span style="color:#808080">&lt;</span><span style="color:#569cd6">i</span> <span style="color:#9cdcfe">class</span><span style="color:#d4d4d4">=</span><span style="color:#ce9178">"feather icon-eye"</span><span style="color:#808080">&gt;</span><span style="color:#808080">&lt;/</span><span style="color:#569cd6">i</span><span style="color:#808080">&gt;</span></div>
  <div class="abs" style="left:179px;top:447.3px;width:2px;height:17px;background:#aeafad"></div>
  </div></div>
<div class="ln" style="top:-3.7px">2</div>
<div class="ln" style="top:14.3px">3</div>
<div class="ln" style="top:32.3px">4</div>
<div class="ln" style="top:50.3px">5</div>
<div class="ln" style="top:68.3px">6</div>
<div class="ln" style="top:86.3px">7</div>
<div class="ln" style="top:104.3px">8</div>
<div class="ln" style="top:122.3px">9</div>
<div class="ln" style="top:140.3px">10</div>
<div class="ln" style="top:158.3px">11</div>
<div class="ln" style="top:176.3px">12</div>
<div class="ln" style="top:194.3px">13</div>
<div class="ln" style="top:212.3px">14</div>
<div class="ln" style="top:230.3px">15</div>
<div class="ln" style="top:248.3px">16</div>
<div class="ln" style="top:266.3px">17</div>
<div class="ln" style="top:284.3px">18</div>
<div class="ln" style="top:302.3px">19</div>
<div class="ln" style="top:320.3px">20</div>
<div class="ln" style="top:338.3px">21</div>
<div class="ln" style="top:356.3px">22</div>
<div class="ln" style="top:374.3px">23</div>
<div class="ln" style="top:392.3px">24</div>
<div class="ln" style="top:410.3px">25</div>
<div class="ln" style="top:428.3px">26</div>
<div class="ln act" style="top:446.3px">27</div>
<div class="ln" style="top:464.3px">28</div>
<div class="ln" style="top:482.3px">29</div>
<div class="ln" style="top:500.3px">30</div>
<div class="ln" style="top:518.3px">31</div>
<div class="ln" style="top:536.3px">32</div>
<div class="ln" style="top:554.3px">33</div>
<div class="ln" style="top:572.3px">34</div>
<div class="ln" style="top:590.3px">35</div>
<div class="ln" style="top:608.3px">36</div>
<div class="ln" style="top:626.3px">37</div>
<div class="ln" style="top:644.3px">38</div>
<div class="ln" style="top:662.3px">39</div>
<div class="ln" style="top:680.3px">40</div>
<div class="ln" style="top:698.3px">41</div>
<div class="ln" style="top:716.3px">42</div>
<div class="ln" style="top:734.3px">43</div>
<div class="ln" style="top:752.3px">44</div>
<div class="ln" style="top:770.3px">45</div>
<div class="ln" style="top:788.3px">46</div>
  <div id="hsl"></div>
  <div class="abs" style="left:924px;top:0;width:6px;height:786px;background:linear-gradient(90deg,rgba(0,0,0,0),rgba(0,0,0,.55));z-index:4"></div>
  <div id="mmwrap"><svg class="mm" width="120" height="112" viewBox="0 0 120 112"><rect x="0" y="0" width="1" height="1.500" fill="#808080"/><rect x="1" y="0" width="3" height="1.500" fill="#569cd6"/><rect x="5" y="0" width="5" height="1.500" fill="#9cdcfe"/><rect x="10" y="0" width="1" height="1.500" fill="#d4d4d4"/><rect x="11" y="0" width="7" height="1.500" fill="#ce9178"/><rect x="19" y="0" width="23" height="1.500" fill="#ce9178"/><rect x="43" y="0" width="18" height="1.500" fill="#ce9178"/><rect x="62" y="0" width="9" height="1.500" fill="#ce9178"/><rect x="72" y="0" width="12" height="1.500" fill="#ce9178"/><rect x="84" y="0" width="1" height="1.500" fill="#808080"/><rect x="2" y="2" width="1" height="1.500" fill="#808080"/><rect x="3" y="2" width="3" height="1.500" fill="#569cd6"/><rect x="6" y="2" width="1" height="1.500" fill="#808080"/><rect x="4" y="4" width="1" height="1.500" fill="#808080"/><rect x="5" y="4" width="2" height="1.500" fill="#569cd6"/><rect x="8" y="4" width="5" height="1.500" fill="#9cdcfe"/><rect x="13" y="4" width="1" height="1.500" fill="#d4d4d4"/><rect x="14" y="4" width="5" height="1.500" fill="#ce9178"/><rect x="20" y="4" width="8" height="1.500" fill="#ce9178"/><rect x="28" y="4" width="1" height="1.500" fill="#808080"/><rect x="29" y="4" width="7" height="1.500" fill="#d4d4d4"/><rect x="37" y="4" width="2" height="1.500" fill="#d4d4d4"/><rect x="40" y="4" width="9" height="1.500" fill="#d4d4d4"/><rect x="49" y="4" width="2" height="1.500" fill="#808080"/><rect x="51" y="4" width="2" height="1.500" fill="#569cd6"/><rect x="53" y="4" width="1" height="1.500" fill="#808080"/><rect x="2" y="6" width="2" height="1.500" fill="#808080"/><rect x="4" y="6" width="3" height="1.500" fill="#569cd6"/><rect x="7" y="6" width="1" height="1.500" fill="#808080"/><rect x="2" y="8" width="1" height="1.500" fill="#808080"/><rect x="3" y="8" width="3" height="1.500" fill="#569cd6"/><rect x="7" y="8" width="5" height="1.500" fill="#9cdcfe"/><rect x="12" y="8" width="1" height="1.500" fill="#d4d4d4"/><rect x="13" y="8" width="7" height="1.500" fill="#ce9178"/><rect x="21" y="8" width="18" height="1.500" fill="#ce9178"/><rect x="40" y="8" width="9" height="1.500" fill="#ce9178"/><rect x="50" y="8" width="12" height="1.500" fill="#ce9178"/><rect x="62" y="8" width="1" height="1.500" fill="#808080"/><rect x="2" y="10" width="2" height="1.500" fill="#808080"/><rect x="4" y="10" width="3" height="1.500" fill="#569cd6"/><rect x="7" y="10" width="1" height="1.500" fill="#808080"/><rect x="0" y="12" width="2" height="1.500" fill="#808080"/><rect x="2" y="12" width="3" height="1.500" fill="#569cd6"/><rect x="5" y="12" width="1" height="1.500" fill="#808080"/><rect x="0" y="16" width="1" height="1.500" fill="#808080"/><rect x="1" y="16" width="3" height="1.500" fill="#569cd6"/><rect x="5" y="16" width="5" height="1.500" fill="#9cdcfe"/><rect x="10" y="16" width="1" height="1.500" fill="#d4d4d4"/><rect x="11" y="16" width="5" height="1.500" fill="#ce9178"/><rect x="16" y="16" width="1" height="1.500" fill="#808080"/><rect x="2" y="18" width="1" height="1.500" fill="#808080"/><rect x="3" y="18" width="3" height="1.500" fill="#569cd6"/><rect x="7" y="18" width="5" height="1.500" fill="#9cdcfe"/><rect x="12" y="18" width="1" height="1.500" fill="#d4d4d4"/><rect x="13" y="18" width="10" height="1.500" fill="#ce9178"/><rect x="24" y="18" width="9" height="1.500" fill="#ce9178"/><rect x="34" y="18" width="13" height="1.500" fill="#ce9178"/><rect x="47" y="18" width="1" height="1.500" fill="#808080"/><rect x="4" y="20" width="1" height="1.500" fill="#808080"/><rect x="5" y="20" width="3" height="1.500" fill="#569cd6"/><rect x="9" y="20" width="5" height="1.500" fill="#9cdcfe"/><rect x="14" y="20" width="1" height="1.500" fill="#d4d4d4"/><rect x="15" y="20" width="6" height="1.500" fill="#ce9178"/><rect x="21" y="20" width="1" height="1.500" fill="#808080"/><rect x="6" y="22" width="1" height="1.500" fill="#808080"/><rect x="7" y="22" width="3" height="1.500" fill="#569cd6"/><rect x="11" y="22" width="5" height="1.500" fill="#9cdcfe"/><rect x="16" y="22" width="1" height="1.500" fill="#d4d4d4"/><rect x="17" y="22" width="11" height="1.500" fill="#ce9178"/><rect x="28" y="22" width="1" height="1.500" fill="#808080"/><rect x="8" y="24" width="1" height="1.500" fill="#808080"/><rect x="9" y="24" width="3" height="1.500" fill="#569cd6"/><rect x="13" y="24" width="5" height="1.500" fill="#9cdcfe"/><rect x="18" y="24" width="1" height="1.500" fill="#d4d4d4"/><rect x="19" y="24" width="18" height="1.500" fill="#ce9178"/><rect x="37" y="24" width="1" height="1.500" fill="#808080"/><rect x="10" y="26" width="1" height="1.500" fill="#808080"/><rect x="11" y="26" width="5" height="1.500" fill="#569cd6"/><rect x="17" y="26" width="5" height="1.500" fill="#9cdcfe"/><rect x="22" y="26" width="1" height="1.500" fill="#d4d4d4"/><rect x="23" y="26" width="6" height="1.500" fill="#ce9178"/><rect x="30" y="26" width="11" height="1.500" fill="#ce9178"/><rect x="42" y="26" width="5" height="1.500" fill="#ce9178"/><rect x="47" y="26" width="1" height="1.500" fill="#808080"/><rect x="12" y="28" width="1" height="1.500" fill="#808080"/><rect x="13" y="28" width="5" height="1.500" fill="#569cd6"/><rect x="18" y="28" width="1" height="1.500" fill="#808080"/><rect x="14" y="30" width="1" height="1.500" fill="#808080"/><rect x="15" y="30" width="2" height="1.500" fill="#569cd6"/><rect x="17" y="30" width="1" height="1.500" fill="#808080"/><rect x="16" y="32" width="1" height="1.500" fill="#808080"/><rect x="17" y="32" width="2" height="1.500" fill="#569cd6"/><rect x="20" y="32" width="5" height="1.500" fill="#9cdcfe"/><rect x="25" y="32" width="1" height="1.500" fill="#d4d4d4"/><rect x="26" y="32" width="6" height="1.500" fill="#ce9178"/><rect x="32" y="32" width="1" height="1.500" fill="#808080"/><rect x="33" y="32" width="7" height="1.500" fill="#d4d4d4"/><rect x="41" y="32" width="2" height="1.500" fill="#d4d4d4"/><rect x="43" y="32" width="2" height="1.500" fill="#808080"/><rect x="45" y="32" width="2" height="1.500" fill="#569cd6"/><rect x="47" y="32" width="1" height="1.500" fill="#808080"/><rect x="16" y="34" width="1" height="1.500" fill="#808080"/><rect x="17" y="34" width="2" height="1.500" fill="#569cd6"/><rect x="20" y="34" width="5" height="1.500" fill="#9cdcfe"/><rect x="25" y="34" width="1" height="1.500" fill="#d4d4d4"/><rect x="26" y="34" width="6" height="1.500" fill="#ce9178"/><rect x="32" y="34" width="1" height="1.500" fill="#808080"/><rect x="33" y="34" width="5" height="1.500" fill="#d4d4d4"/><rect x="39" y="34" width="4" height="1.500" fill="#d4d4d4"/><rect x="43" y="34" width="2" height="1.500" fill="#808080"/><rect x="45" y="34" width="2" height="1.500" fill="#569cd6"/><rect x="47" y="34" width="1" height="1.500" fill="#808080"/><rect x="16" y="36" width="1" height="1.500" fill="#808080"/><rect x="17" y="36" width="2" height="1.500" fill="#569cd6"/><rect x="20" y="36" width="5" height="1.500" fill="#9cdcfe"/><rect x="25" y="36" width="1" height="1.500" fill="#d4d4d4"/><rect x="26" y="36" width="6" height="1.500" fill="#ce9178"/><rect x="32" y="36" width="1" height="1.500" fill="#808080"/><rect x="33" y="36" width="4" height="1.500" fill="#d4d4d4"/><rect x="37" y="36" width="2" height="1.500" fill="#808080"/><rect x="39" y="36" width="2" height="1.500" fill="#569cd6"/><rect x="41" y="36" width="1" height="1.500" fill="#808080"/><rect x="16" y="38" width="1" height="1.500" fill="#808080"/><rect x="17" y="38" width="2" height="1.500" fill="#569cd6"/><rect x="20" y="38" width="5" height="1.500" fill="#9cdcfe"/><rect x="25" y="38" width="1" height="1.500" fill="#d4d4d4"/><rect x="26" y="38" width="6" height="1.500" fill="#ce9178"/><rect x="32" y="38" width="1" height="1.500" fill="#808080"/><rect x="33" y="38" width="4" height="1.500" fill="#d4d4d4"/><rect x="37" y="38" width="2" height="1.500" fill="#808080"/><rect x="39" y="38" width="2" height="1.500" fill="#569cd6"/><rect x="41" y="38" width="1" height="1.500" fill="#808080"/><rect x="16" y="40" width="1" height="1.500" fill="#808080"/><rect x="17" y="40" width="2" height="1.500" fill="#569cd6"/><rect x="20" y="40" width="5" height="1.500" fill="#9cdcfe"/><rect x="25" y="40" width="1" height="1.500" fill="#d4d4d4"/><rect x="26" y="40" width="6" height="1.500" fill="#ce9178"/><rect x="32" y="40" width="1" height="1.500" fill="#808080"/><rect x="33" y="40" width="5" height="1.500" fill="#d4d4d4"/><rect x="38" y="40" width="2" height="1.500" fill="#808080"/><rect x="40" y="40" width="2" height="1.500" fill="#569cd6"/><rect x="42" y="40" width="1" height="1.500" fill="#808080"/><rect x="16" y="42" width="1" height="1.500" fill="#808080"/><rect x="17" y="42" width="2" height="1.500" fill="#569cd6"/><rect x="20" y="42" width="5" height="1.500" fill="#9cdcfe"/><rect x="25" y="42" width="1" height="1.500" fill="#d4d4d4"/><rect x="26" y="42" width="6" height="1.500" fill="#ce9178"/><rect x="32" y="42" width="1" height="1.500" fill="#808080"/><rect x="33" y="42" width="6" height="1.500" fill="#d4d4d4"/><rect x="39" y="42" width="2" height="1.500" fill="#808080"/><rect x="41" y="42" width="2" height="1.500" fill="#569cd6"/><rect x="43" y="42" width="1" height="1.500" fill="#808080"/><rect x="16" y="44" width="1" height="1.500" fill="#808080"/><rect x="17" y="44" width="2" height="1.500" fill="#569cd6"/><rect x="20" y="44" width="5" height="1.500" fill="#9cdcfe"/><rect x="25" y="44" width="1" height="1.500" fill="#d4d4d4"/><rect x="26" y="44" width="6" height="1.500" fill="#ce9178"/><rect x="32" y="44" width="1" height="1.500" fill="#808080"/><rect x="33" y="44" width="2" height="1.500" fill="#d4d4d4"/><rect x="36" y="44" width="6" height="1.500" fill="#d4d4d4"/><rect x="42" y="44" width="2" height="1.500" fill="#808080"/><rect x="44" y="44" width="2" height="1.500" fill="#569cd6"/><rect x="46" y="44" width="1" height="1.500" fill="#808080"/><rect x="16" y="46" width="1" height="1.500" fill="#808080"/><rect x="17" y="46" width="2" height="1.500" fill="#569cd6"/><rect x="20" y="46" width="5" height="1.500" fill="#9cdcfe"/><rect x="25" y="46" width="1" height="1.500" fill="#d4d4d4"/><rect x="26" y="46" width="6" height="1.500" fill="#ce9178"/><rect x="32" y="46" width="1" height="1.500" fill="#808080"/><rect x="33" y="46" width="7" height="1.500" fill="#d4d4d4"/><rect x="40" y="46" width="2" height="1.500" fill="#808080"/><rect x="42" y="46" width="2" height="1.500" fill="#569cd6"/><rect x="44" y="46" width="1" height="1.500" fill="#808080"/><rect x="14" y="48" width="2" height="1.500" fill="#808080"/><rect x="16" y="48" width="2" height="1.500" fill="#569cd6"/><rect x="18" y="48" width="1" height="1.500" fill="#808080"/><rect x="12" y="50" width="2" height="1.500" fill="#808080"/><rect x="14" y="50" width="5" height="1.500" fill="#569cd6"/><rect x="19" y="50" width="1" height="1.500" fill="#808080"/><rect x="12" y="52" width="1" height="1.500" fill="#808080"/><rect x="13" y="52" width="5" height="1.500" fill="#569cd6"/><rect x="18" y="52" width="1" height="1.500" fill="#808080"/><rect x="14" y="54" width="1" height="1.500" fill="#808080"/><rect x="15" y="54" width="2" height="1.500" fill="#569cd6"/><rect x="18" y="54" width="1" height="1.500" fill="#d4d4d4"/><rect x="19" y="54" width="5" height="1.500" fill="#9cdcfe"/><rect x="24" y="54" width="1" height="1.500" fill="#d4d4d4"/><rect x="25" y="54" width="1" height="1.500" fill="#ce9178"/><rect x="26" y="54" width="3" height="1.500" fill="#569cd6"/><rect x="30" y="54" width="4" height="1.500" fill="#9cdcfe"/><rect x="35" y="54" width="2" height="1.500" fill="#569cd6"/><rect x="38" y="54" width="11" height="1.500" fill="#9cdcfe"/><rect x="49" y="54" width="1" height="1.500" fill="#ce9178"/><rect x="50" y="54" width="1" height="1.500" fill="#808080"/><rect x="16" y="56" width="1" height="1.500" fill="#808080"/><rect x="17" y="56" width="2" height="1.500" fill="#569cd6"/><rect x="19" y="56" width="1" height="1.500" fill="#808080"/><rect x="20" y="56" width="2" height="1.500" fill="#d4d4d4"/><rect x="23" y="56" width="15" height="1.500" fill="#9cdcfe"/><rect x="39" y="56" width="2" height="1.500" fill="#d4d4d4"/><rect x="41" y="56" width="2" height="1.500" fill="#808080"/><rect x="43" y="56" width="2" height="1.500" fill="#569cd6"/><rect x="45" y="56" width="1" height="1.500" fill="#808080"/><rect x="16" y="58" width="1" height="1.500" fill="#808080"/><rect x="17" y="58" width="2" height="1.500" fill="#569cd6"/><rect x="19" y="58" width="1" height="1.500" fill="#808080"/><rect x="20" y="58" width="2" height="1.500" fill="#d4d4d4"/><rect x="23" y="58" width="20" height="1.500" fill="#9cdcfe"/><rect x="44" y="58" width="2" height="1.500" fill="#d4d4d4"/><rect x="46" y="58" width="2" height="1.500" fill="#808080"/><rect x="48" y="58" width="2" height="1.500" fill="#569cd6"/><rect x="50" y="58" width="1" height="1.500" fill="#808080"/><rect x="16" y="60" width="1" height="1.500" fill="#808080"/><rect x="17" y="60" width="2" height="1.500" fill="#569cd6"/><rect x="19" y="60" width="1" height="1.500" fill="#808080"/><rect x="20" y="60" width="2" height="1.500" fill="#d4d4d4"/><rect x="23" y="60" width="9" height="1.500" fill="#9cdcfe"/><rect x="33" y="60" width="2" height="1.500" fill="#d4d4d4"/><rect x="35" y="60" width="2" height="1.500" fill="#808080"/><rect x="37" y="60" width="2" height="1.500" fill="#569cd6"/><rect x="39" y="60" width="1" height="1.500" fill="#808080"/><rect x="16" y="62" width="1" height="1.500" fill="#808080"/><rect x="17" y="62" width="2" height="1.500" fill="#569cd6"/><rect x="19" y="62" width="1" height="1.500" fill="#808080"/><rect x="20" y="62" width="2" height="1.500" fill="#d4d4d4"/><rect x="23" y="62" width="9" height="1.500" fill="#9cdcfe"/><rect x="33" y="62" width="2" height="1.500" fill="#d4d4d4"/><rect x="35" y="62" width="2" height="1.500" fill="#808080"/><rect x="37" y="62" width="2" height="1.500" fill="#569cd6"/><rect x="39" y="62" width="1" height="1.500" fill="#808080"/><rect x="16" y="64" width="1" height="1.500" fill="#808080"/><rect x="17" y="64" width="2" height="1.500" fill="#569cd6"/><rect x="19" y="64" width="1" height="1.500" fill="#808080"/><rect x="20" y="64" width="2" height="1.500" fill="#d4d4d4"/><rect x="23" y="64" width="10" height="1.500" fill="#9cdcfe"/><rect x="34" y="64" width="2" height="1.500" fill="#d4d4d4"/><rect x="36" y="64" width="2" height="1.500" fill="#808080"/><rect x="38" y="64" width="2" height="1.500" fill="#569cd6"/><rect x="40" y="64" width="1" height="1.500" fill="#808080"/><rect x="16" y="66" width="1" height="1.500" fill="#808080"/><rect x="17" y="66" width="2" height="1.500" fill="#569cd6"/><rect x="19" y="66" width="1" height="1.500" fill="#808080"/><rect x="18" y="68" width="1" height="1.500" fill="#808080"/><rect x="19" y="68" width="4" height="1.500" fill="#569cd6"/><rect x="24" y="68" width="5" height="1.500" fill="#9cdcfe"/><rect x="29" y="68" width="1" height="1.500" fill="#d4d4d4"/><rect x="30" y="68" width="7" height="1.500" fill="#ce9178"/><rect x="38" y="68" width="1" height="1.500" fill="#d4d4d4"/><rect x="39" y="68" width="7" height="1.500" fill="#9cdcfe"/><rect x="46" y="68" width="1" height="1.500" fill="#d4d4d4"/><rect x="47" y="68" width="1" height="1.500" fill="#d4d4d4"/><rect x="48" y="68" width="1" height="1.500" fill="#ce9178"/><rect x="49" y="68" width="1" height="1.500" fill="#d4d4d4"/><rect x="50" y="68" width="12" height="1.500" fill="#ce9178"/><rect x="62" y="68" width="1" height="1.500" fill="#d4d4d4"/><rect x="64" y="68" width="16" height="1.500" fill="#9cdcfe"/><rect x="81" y="68" width="1" height="1.500" fill="#d4d4d4"/><rect x="82" y="68" width="1" height="1.500" fill="#d4d4d4"/><rect x="84" y="68" width="1" height="1.500" fill="#b5cea8"/><rect x="85" y="68" width="1" height="1.500" fill="#d4d4d4"/><rect x="87" y="68" width="12" height="1.500" fill="#ce9178"/><rect x="99" y="68" width="1" height="1.500" fill="#d4d4d4"/><rect x="101" y="68" width="15" height="1.500" fill="#9cdcfe"/><rect x="20" y="70" width="2" height="1.500" fill="#d4d4d4"/><rect x="23" y="70" width="16" height="1.500" fill="#9cdcfe"/><rect x="40" y="70" width="1" height="1.500" fill="#d4d4d4"/><rect x="41" y="70" width="1" height="1.500" fill="#d4d4d4"/><rect x="43" y="70" width="1" height="1.500" fill="#b5cea8"/><rect x="45" y="70" width="1" height="1.500" fill="#d4d4d4"/><rect x="47" y="70" width="9" height="1.500" fill="#ce9178"/><rect x="57" y="70" width="1" height="1.500" fill="#d4d4d4"/><rect x="59" y="70" width="1" height="1.500" fill="#d4d4d4"/><rect x="60" y="70" width="16" height="1.500" fill="#9cdcfe"/><rect x="77" y="70" width="1" height="1.500" fill="#d4d4d4"/><rect x="78" y="70" width="1" height="1.500" fill="#d4d4d4"/><rect x="80" y="70" width="1" height="1.500" fill="#b5cea8"/><rect x="82" y="70" width="1" height="1.500" fill="#d4d4d4"/><rect x="84" y="70" width="11" height="1.500" fill="#ce9178"/><rect x="96" y="70" width="1" height="1.500" fill="#d4d4d4"/><rect x="98" y="70" width="1" height="1.500" fill="#d4d4d4"/><rect x="99" y="70" width="16" height="1.500" fill="#9cdcfe"/><rect x="18" y="72" width="2" height="1.500" fill="#808080"/><rect x="20" y="72" width="4" height="1.500" fill="#569cd6"/><rect x="24" y="72" width="1" height="1.500" fill="#808080"/><rect x="16" y="74" width="2" height="1.500" fill="#808080"/><rect x="18" y="74" width="2" height="1.500" fill="#569cd6"/><rect x="20" y="74" width="1" height="1.500" fill="#808080"/><rect x="16" y="76" width="1" height="1.500" fill="#808080"/><rect x="17" y="76" width="2" height="1.500" fill="#569cd6"/><rect x="19" y="76" width="1" height="1.500" fill="#808080"/><rect x="18" y="78" width="1" height="1.500" fill="#808080"/><rect x="19" y="78" width="4" height="1.500" fill="#569cd6"/><rect x="24" y="78" width="5" height="1.500" fill="#9cdcfe"/><rect x="29" y="78" width="1" height="1.500" fill="#d4d4d4"/><rect x="30" y="78" width="7" height="1.500" fill="#ce9178"/><rect x="38" y="78" width="1" height="1.500" fill="#d4d4d4"/><rect x="39" y="78" width="7" height="1.500" fill="#9cdcfe"/><rect x="46" y="78" width="1" height="1.500" fill="#d4d4d4"/><rect x="47" y="78" width="1" height="1.500" fill="#d4d4d4"/><rect x="48" y="78" width="1" height="1.500" fill="#ce9178"/><rect x="49" y="78" width="14" height="1.500" fill="#9cdcfe"/><rect x="64" y="78" width="1" height="1.500" fill="#d4d4d4"/><rect x="66" y="78" width="12" height="1.500" fill="#ce9178"/><rect x="79" y="78" width="1" height="1.500" fill="#d4d4d4"/><rect x="81" y="78" width="11" height="1.500" fill="#ce9178"/><rect x="92" y="78" width="1" height="1.500" fill="#ce9178"/><rect x="93" y="78" width="1" height="1.500" fill="#808080"/><rect x="20" y="80" width="2" height="1.500" fill="#d4d4d4"/><rect x="23" y="80" width="14" height="1.500" fill="#9cdcfe"/><rect x="38" y="80" width="1" height="1.500" fill="#d4d4d4"/><rect x="40" y="80" width="6" height="1.500" fill="#ce9178"/><rect x="47" y="80" width="1" height="1.500" fill="#d4d4d4"/><rect x="49" y="80" width="7" height="1.500" fill="#ce9178"/><rect x="57" y="80" width="2" height="1.500" fill="#d4d4d4"/><rect x="18" y="82" width="2" height="1.500" fill="#808080"/><rect x="20" y="82" width="4" height="1.500" fill="#569cd6"/><rect x="24" y="82" width="1" height="1.500" fill="#808080"/><rect x="16" y="84" width="2" height="1.500" fill="#808080"/><rect x="18" y="84" width="2" height="1.500" fill="#569cd6"/><rect x="20" y="84" width="1" height="1.500" fill="#808080"/><rect x="16" y="86" width="1" height="1.500" fill="#808080"/><rect x="17" y="86" width="2" height="1.500" fill="#569cd6"/><rect x="19" y="86" width="1" height="1.500" fill="#808080"/><rect x="18" y="88" width="1" height="1.500" fill="#808080"/><rect x="19" y="88" width="6" height="1.500" fill="#569cd6"/><rect x="26" y="88" width="4" height="1.500" fill="#9cdcfe"/><rect x="30" y="88" width="1" height="1.500" fill="#d4d4d4"/><rect x="31" y="88" width="8" height="1.500" fill="#ce9178"/><rect x="40" y="88" width="5" height="1.500" fill="#9cdcfe"/><rect x="45" y="88" width="1" height="1.500" fill="#d4d4d4"/><rect x="46" y="88" width="4" height="1.500" fill="#ce9178"/><rect x="51" y="88" width="13" height="1.500" fill="#ce9178"/><rect x="65" y="88" width="8" height="1.500" fill="#ce9178"/><rect x="74" y="88" width="7" height="1.500" fill="#ce9178"/><rect x="82" y="88" width="1" height="1.500" fill="#d4d4d4"/><rect x="83" y="88" width="10" height="1.500" fill="#9cdcfe"/><rect x="93" y="88" width="1" height="1.500" fill="#d4d4d4"/><rect x="94" y="88" width="1" height="1.500" fill="#d4d4d4"/><rect x="95" y="88" width="1" height="1.500" fill="#ce9178"/><rect x="96" y="88" width="19" height="1.500" fill="#ce9178"/><rect x="20" y="90" width="1" height="1.500" fill="#808080"/><rect x="21" y="90" width="1" height="1.500" fill="#569cd6"/><rect x="23" y="90" width="5" height="1.500" fill="#9cdcfe"/><rect x="28" y="90" width="1" height="1.500" fill="#d4d4d4"/><rect x="29" y="90" width="8" height="1.500" fill="#ce9178"/><rect x="38" y="90" width="9" height="1.500" fill="#ce9178"/><rect x="47" y="90" width="1" height="1.500" fill="#808080"/><rect x="48" y="90" width="2" height="1.500" fill="#808080"/><rect x="50" y="90" width="1" height="1.500" fill="#569cd6"/><rect x="51" y="90" width="1" height="1.500" fill="#808080"/><rect x="18" y="92" width="2" height="1.500" fill="#808080"/><rect x="20" y="92" width="6" height="1.500" fill="#569cd6"/><rect x="26" y="92" width="1" height="1.500" fill="#808080"/><rect x="16" y="94" width="2" height="1.500" fill="#808080"/><rect x="18" y="94" width="2" height="1.500" fill="#569cd6"/><rect x="20" y="94" width="1" height="1.500" fill="#808080"/><rect x="14" y="96" width="2" height="1.500" fill="#808080"/><rect x="16" y="96" width="2" height="1.500" fill="#569cd6"/><rect x="18" y="96" width="1" height="1.500" fill="#808080"/><rect x="12" y="98" width="2" height="1.500" fill="#808080"/><rect x="14" y="98" width="5" height="1.500" fill="#569cd6"/><rect x="19" y="98" width="1" height="1.500" fill="#808080"/><rect x="10" y="100" width="2" height="1.500" fill="#808080"/><rect x="12" y="100" width="5" height="1.500" fill="#569cd6"/><rect x="17" y="100" width="1" height="1.500" fill="#808080"/><rect x="8" y="102" width="2" height="1.500" fill="#808080"/><rect x="10" y="102" width="3" height="1.500" fill="#569cd6"/><rect x="13" y="102" width="1" height="1.500" fill="#808080"/><rect x="6" y="104" width="2" height="1.500" fill="#808080"/><rect x="8" y="104" width="3" height="1.500" fill="#569cd6"/><rect x="11" y="104" width="1" height="1.500" fill="#808080"/><rect x="4" y="106" width="2" height="1.500" fill="#808080"/><rect x="6" y="106" width="3" height="1.500" fill="#569cd6"/><rect x="9" y="106" width="1" height="1.500" fill="#808080"/><rect x="2" y="108" width="2" height="1.500" fill="#808080"/><rect x="4" y="108" width="3" height="1.500" fill="#569cd6"/><rect x="7" y="108" width="1" height="1.500" fill="#808080"/><rect x="0" y="110" width="2" height="1.500" fill="#808080"/><rect x="2" y="110" width="3" height="1.500" fill="#569cd6"/><rect x="5" y="110" width="1" height="1.500" fill="#808080"/></svg></div>
  <div id="vsb"><div id="vsl"></div><div class="abs" style="left:0;top:203px;width:14px;height:3px;background:#8f8f8f"></div></div>
</div>

<!-- STATUS BAR -->
<div id="status">
  <div class="r"><svg style="left:9px" viewBox="0 0 16 16"><path d="M3 3.500l3.500 3.500L3 10.500M13 5.500L9.500 9l3.500 3.500" fill="none" stroke="#fff" stroke-width="1.300" transform="rotate(-14 8 8)"/></svg></div>
<span style="left:57.6px;letter-spacing:0.55px">dinal/changes-text-analysis*</span>
<span style="left:275.7px;letter-spacing:0.09px">0</span>
<span style="left:303.5px;letter-spacing:0.09px">0</span>
<span style="left:344.5px;letter-spacing:0.09px">0</span>
<span style="left:955.9px;letter-spacing:0.19px">Watch Sass</span>
<span style="left:1037.6px;letter-spacing:0.37px">Ln 27, Col 20</span>
<span style="left:1130.8px;letter-spacing:0.19px">Spaces: 2</span>
<span style="left:1202.8px;letter-spacing:0.40px">UTF-8</span>
<span style="left:1255.8px;letter-spacing:0.40px">LF</span>
<span style="left:1285.4px;letter-spacing:0.14px">HTML</span>
<span style="left:1353.2px;letter-spacing:-0.01px">Go Live</span>
<svg style="left:38.6px" viewBox="0 0 16 16"><circle cx="5" cy="3.500" r="1.700" stroke="#fff" fill="none" stroke-width="1.200"/><circle cx="5" cy="12.500" r="1.700" stroke="#fff" fill="none" stroke-width="1.200"/><circle cx="11.500" cy="5.500" r="1.700" stroke="#fff" fill="none" stroke-width="1.200"/><path d="M5 5.200v5.600M11.500 7.200c0 2.800-6.500 1.800-6.500 3.800" stroke="#fff" fill="none" stroke-width="1.200"/></svg>
<svg style="left:227.1px" viewBox="0 0 16 16"><path d="M3 8a5 5 0 0 1 9-3M13 8a5 5 0 0 1-9 3" stroke="#fff" fill="none" stroke-width="1.200"/><path d="M12.500 2v3.500H9M3.500 14v-3.500H7" stroke="#fff" fill="none" stroke-width="1.200"/></svg>
<svg style="left:254.6px" viewBox="0 0 16 16"><circle cx="8" cy="8" r="5.800" stroke="#fff" fill="none" stroke-width="1.200"/><path d="M5.700 5.700l4.600 4.600M10.300 5.700l-4.600 4.600" stroke="#fff" fill="none" stroke-width="1.200"/></svg>
<svg style="left:283.8px" viewBox="0 0 16 16"><path d="M8 2.300L14.300 13.500H1.700z" stroke="#fff" fill="none" stroke-width="1.200" stroke-linejoin="round"/><path d="M8 6.500v3.500M8 11.200v1.200" stroke="#fff" fill="none" stroke-width="1.200"/></svg>
<svg style="left:322.8px" viewBox="0 0 16 16"><circle cx="8" cy="6" r="1.300" fill="#fff"/><path d="M8 7v7M5.500 8.500a3.500 3.500 0 0 1 0-5M10.500 8.500a3.500 3.500 0 0 0 0-5M3.500 10.500a6.300 6.300 0 0 1 0-9M12.500 10.500a6.300 6.300 0 0 0 0-9" stroke="#fff" fill="none" stroke-width="1.200"/></svg>
<svg style="left:935.8px" viewBox="0 0 16 16"><path d="M1.500 8C3.500 4.500 6 3.500 8 3.500s4.500 1 6.500 4.500C12.500 11.500 10 12.500 8 12.500S3.500 11.500 1.500 8z" fill="#fff"/><circle cx="8" cy="8" r="2.200" fill="#007acc"/></svg>
<svg style="left:1332.5px" viewBox="0 0 16 16"><circle cx="8" cy="8" r="5.800" fill="#fff"/><circle cx="8" cy="7" r="1.500" fill="#007acc"/><path d="M8 8v4.500" stroke="#007acc" stroke-width="1.200"/><path d="M5.500 9.500a3.300 3.300 0 0 1 0-5M10.500 9.500a3.300 3.300 0 0 0 0-5" stroke="#007acc" fill="none"/></svg>
<svg style="left:1410.8px" viewBox="0 0 16 16"><path d="M8 2a4 4 0 0 0-4 4v3.500L2.700 12h10.600L12 9.500V6a4 4 0 0 0-4-4zM6.500 13.200a1.500 1.500 0 0 0 3 0" stroke="#fff" fill="none" stroke-width="1.200"/></svg>
</div>

</div>
</body></html>
